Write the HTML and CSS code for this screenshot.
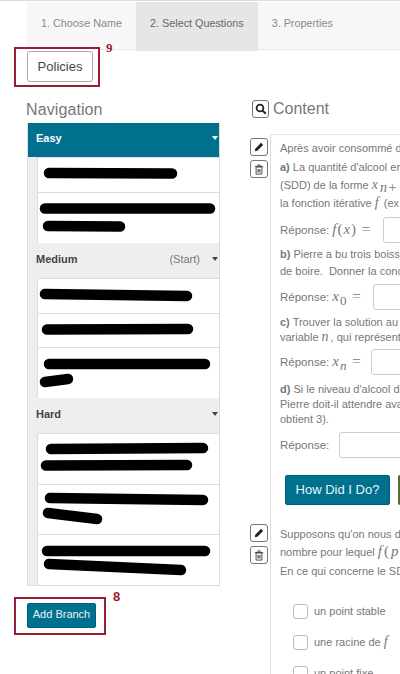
FILE: index.html
```html
<!DOCTYPE html>
<html lang="en">
<head>
  <meta charset="UTF-8" />
  <meta name="viewport" content="width=device-width, initial-scale=1.0"/>
  <title>Select Questions</title>
  <link rel="stylesheet" href="styles.css">
</head>
<body>
  <div class="page">
    <div class="tabs">
      <div class="tab">1. Choose Name</div>
      <div class="tab active">2. Select Questions</div>
      <div class="tab">3. Properties</div>
    </div>

    <div class="policies-row">
      <div class="callout policies-box"><button class="btn-plain" type="button">Policies</button></div>
      <div class="mark mark-nine">9</div>
    </div>

    <div class="columns">
      <div class="nav-col">
        <h2 class="heading nav-heading">Navigation</h2>
        <div class="nav-panel">
          <div class="branch current"><b>Easy</b><span class="caret"></span></div>
          <ul class="items">
            <li class="h35"><svg width="183" height="35"><path d="M11 15 L134 15.500"/></svg></li>
            <li class="h51"><svg width="183" height="51"><path d="M7 15.500 L172 15.500"/><path d="M10 33 L82 33.500"/></svg></li>
          </ul>
          <div class="branch"><b>Medium</b><span class="start">(Start)</span><span class="caret"></span></div>
          <ul class="items">
            <li class="h35"><svg width="183" height="35"><path d="M7 15 L149 17"/></svg></li>
            <li class="h34"><svg width="183" height="34"><path d="M9 15.500 L150 15"/></svg></li>
            <li class="h51"><svg width="183" height="51"><path d="M11 16 L167 16"/><path d="M7 34 L30 31"/></svg></li>
          </ul>
          <div class="branch"><b>Hard</b><span class="caret"></span></div>
          <ul class="items">
            <li class="h51"><svg width="183" height="51"><path d="M13 15 L165 14"/><path d="M8 31.500 L149 31"/></svg></li>
            <li class="h50"><svg width="183" height="50"><path d="M12 13 L165 15"/><path d="M10 28 L59 34"/></svg></li>
            <li class="h51"><svg width="183" height="51"><path d="M9 16 L167 16"/><path d="M11 29 L143 35"/></svg></li>
          </ul>
        </div>
        <div class="branch-row">
          <div class="callout branch-box"><button class="btn-blue btn-small" type="button">Add Branch</button></div>
          <div class="mark mark-eight">8</div>
        </div>
      </div>

      <div class="content-col">
        <h2 class="heading content-heading">
          <span class="icon-btn search-btn">
            <svg width="12" height="12" viewBox="0 0 12 12"><circle cx="5" cy="5" r="3.400" fill="none" stroke="#222" stroke-width="1.800"/><path d="M7.600 7.600 L10.800 10.800" stroke="#222" stroke-width="2"/></svg>
          </span>Content
        </h2>

        <div class="question first">
          <div class="tools">
            <span class="icon-btn tool">
              <svg width="10" height="10" viewBox="0 0 12 12"><path d="M8.500 1 L11 3.500 L4 10.500 L1 11 L1.500 8 Z" fill="#222"/></svg>
            </span>
            <span class="icon-btn tool">
              <svg width="10" height="11" viewBox="0 0 12 13"><path d="M2.500 3.500 H9.500 V12 H2.500 Z M1 3 H11 M4.500 2.500 V1 H7.500 V2.500 M4.700 6 V10 M6 6 V10 M7.300 6 V10" fill="none" stroke="#333" stroke-width="1"/></svg>
            </span>
          </div>
          <div class="body">
            <p class="line g5">Après avoir consommé d</p>
            <p class="line g3"><b>a)</b> La quantité d'alcool en</p>
            <p class="line g2">(SDD) de la forme <i class="m">x</i><sub class="m"><i>n</i>+</sub></p>
            <p class="line g2">la fonction itérative <i class="m">f</i> (ex</p>
            <div class="answer a-fx">Réponse: <span class="m"><i>f</i>(<i>x</i>) =</span><span class="field"></span></div>
            <p class="line g3"><b>b)</b> Pierre a bu trois boiss</p>
            <p class="line g1">de boire.&nbsp; Donner la conc</p>
            <div class="answer a-x0">Réponse: <span class="m"><i>x</i><sub>0</sub> =</span><span class="field"></span></div>
            <p class="line g4"><b>c)</b> Trouver la solution au</p>
            <p class="line tight">variable <i class="m">n</i>, qui représent</p>
            <div class="answer a-xn">Réponse: <span class="m"><i>x</i><sub><i>n</i></sub> =</span><span class="field"></span></div>
            <p class="line g6"><b>d)</b> Si le niveau d'alcool d</p>
            <p class="line tight">Pierre doit-il attendre ava</p>
            <p class="line tight">obtient 3).</p>
            <div class="answer a-d">Réponse:<span class="field"></span></div>
            <div class="actions">
              <button class="btn-blue btn-big" type="button">How Did I Do?</button>
              <button class="btn-next" type="button"></button>
            </div>
          </div>
        </div>

        <div class="question second">
          <div class="tools">
            <span class="icon-btn tool">
              <svg width="10" height="10" viewBox="0 0 12 12"><path d="M8.500 1 L11 3.500 L4 10.500 L1 11 L1.500 8 Z" fill="#222"/></svg>
            </span>
            <span class="icon-btn tool">
              <svg width="10" height="11" viewBox="0 0 12 13"><path d="M2.500 3.500 H9.500 V12 H2.500 Z M1 3 H11 M4.500 2.500 V1 H7.500 V2.500 M4.700 6 V10 M6 6 V10 M7.300 6 V10" fill="none" stroke="#333" stroke-width="1"/></svg>
            </span>
          </div>
          <div class="body">
            <p class="line g2">Supposons qu'on nous d</p>
            <p class="line g2">nombre pour lequel <span class="m wide"><i>f</i>(<i>p</i></span></p>
            <p class="line g3">En ce qui concerne le SD</p>
            <div class="option o-first"><span class="check"></span>un point stable</div>
            <div class="option"><span class="check"></span>une racine de&nbsp;<i class="m">f</i></div>
            <div class="option"><span class="check"></span>un point fixe</div>
          </div>
        </div>
      </div>
    </div>
  </div>
</body>
</html>
```

FILE: styles.css
```css
* {
  box-sizing: border-box;
}
html, body {
  margin: 0;
  padding: 0;
  background: #fff;
}
body {
  font-family: "Liberation Sans", Arial, sans-serif;
  color: #777;
  font-size: 11px;
}
.page {
  width: 400px;
  height: 674px;
  overflow: hidden;
  border-top: 1px solid #ddd;
  padding-top: 1px;
}

/* wizard tabs */
.tabs {
  display: flex;
  height: 48px;
  margin-left: 27px;
  background: #f7f7f7;
  border-bottom: 1px solid #e8e8e8;
}
.tab {
  padding: 0 14px;
  line-height: 42px;
  font-size: 10.800px;
  color: #8a8a8a;
}
.tab.active {
  height: 49px;
  background: #e6e6e6;
  color: #666;
}

/* red annotation boxes */
.callout {
  border: 2px solid #9a1c32;
  background: #fff;
}
.mark {
  color: #9a1c32;
  font-weight: bold;
  font-size: 13px;
}
.policies-row {
  display: flex;
  height: 40px;
  margin: -3px 0 0 14px;
  position: relative;
}
.policies-box {
  width: 86px;
  height: 40px;
  padding: 2px 0 0 11px;
}
.mark-nine {
  margin: -7px 0 0 6px;
  font-family: "Liberation Serif", serif;
}
.btn-plain {
  width: 66px;
  height: 31px;
  background: #fff;
  border: 1px solid #aaa;
  border-radius: 3px;
  color: #444;
  font: 13px "Liberation Sans", Arial, sans-serif;
  padding: 0;
}

.columns {
  display: flex;
  padding-top: 11px;
}
.heading {
  margin: 0;
  font-size: 16px;
  font-weight: normal;
  line-height: 20px;
  color: #777;
}
.nav-heading {
  margin: 2px 0 0 -1px;
  letter-spacing: 0.100px;
}

/* navigation column */
.nav-col {
  width: 193px;
  margin-left: 27px;
  margin-right: 30px;
  flex: none;
}
.nav-panel {
  margin-top: 3px;
  background: #eee;
  border: 1px solid #ddd;
  border-top: 0;
}
.branch {
  display: flex;
  align-items: center;
  height: 35px;
  padding: 0 1px 4px 8px;
  color: #444;
}
.branch b {
  flex: 1;
}
.branch.current {
  height: 34px;
  background: #00708f;
  color: #fff;
}
.start {
  margin-right: 12px;
  color: #777;
}
.caret {
  width: 0;
  height: 0;
  border-left: 3.500px solid transparent;
  border-right: 3.500px solid transparent;
  border-top: 4px solid #444;
}
.current .caret {
  border-top-color: #fff;
}
.items {
  list-style: none;
  margin: 0 0 0 9px;
  padding: 0;
  background: #fff;
  border-left: 1px solid #ddd;
}
.items li {
  border-top: 1px solid #ddd;
  overflow: hidden;
}
.items svg {
  display: block;
}
.items path {
  stroke: #000;
  stroke-width: 10.500;
  stroke-linecap: round;
  fill: none;
}
.h34 { height: 34px; }
.h35 { height: 35px; }
.h50 { height: 50px; }
.h51 { height: 51px; }

.branch-row {
  display: flex;
  margin: 11px 0 0 -13px;
}
.branch-box {
  width: 92px;
  height: 38px;
  padding: 4px 0 0 11px;
}
.mark-eight {
  margin: -8px 0 0 7px;
}
.btn-blue {
  background: #00708f;
  border: 1px solid #00617c;
  border-radius: 2px;
  color: #e8f4f8;
  font-family: "Liberation Sans", Arial, sans-serif;
  padding: 0;
}
.btn-small {
  width: 69px;
  height: 25px;
  padding-bottom: 4px;
  font-size: 11px;
}

/* content column */
.content-col {
  flex: none;
  width: 180px;
}
.content-heading {
  display: flex;
  align-items: center;
  margin-left: 2px;
  margin-top: 1px;
  height: 20px;
}
.icon-btn {
  display: flex;
  align-items: center;
  justify-content: center;
  background: #fff;
  border: 1px solid #777;
  border-radius: 3px;
}
.search-btn {
  width: 17px;
  height: 18px;
  margin-right: 4px;
}
.question {
  display: flex;
}
.first {
  margin-top: 15px;
}
.second {
  padding-top: 15px;
}
.tools {
  width: 20px;
  flex: none;
  display: flex;
  flex-direction: column;
  gap: 4px;
  padding-top: 4px;
}
.tool {
  width: 18px;
  height: 18px;
}
.body {
  flex: 1;
  min-width: 0;
  padding-left: 9px;
  border-left: 1px solid #ddd;
  white-space: nowrap;
}
.first .body {
  border-top: 1px solid #e6e6e6;
}
.second .body {
  margin-top: -15px;
  padding-top: 19px;
}
.line {
  margin: 0;
  height: 16px;
  line-height: 16px;
}
.g1 { margin-top: 1px; }
.g2 { margin-top: 2px; }
.g3 { margin-top: 3px; }
.g4 { margin-top: 4px; }
.g5 { margin-top: 5px; }
.g6 { margin-top: 6px; }
.tight {
  margin-top: -1px;
}
.m {
  font-family: "Liberation Serif", serif;
  font-size: 14px;
  line-height: 1;
  margin-right: 2px;
}
.wide {
  font-size: 15px;
  letter-spacing: 2px;
}
sub {
  font-size: 13px;
  line-height: 0;
}
.line sub {
  letter-spacing: 1.500px;
}
.answer {
  display: flex;
  align-items: center;
  gap: 3px;
  font-size: 11.500px;
  height: 27px;
  margin-top: 5px;
}
.answer .m {
  font-size: 15px;
  margin: 0;
  letter-spacing: 1px;
}
.field {
  flex: none;
  width: 120px;
  height: 26px;
  border: 1px solid #ccc;
  border-radius: 3px;
  background: #fff;
}
.a-fx .field { margin-left: 9px; }
.a-x0 { margin-top: 4px; }
.a-x0 .field { margin-left: 8px; }
.a-xn { margin-top: 3px; }
.a-xn .field { margin-left: 6px; }
.a-d { margin-top: 4px; }
.a-d .field { margin-left: 7px; }
.actions {
  display: flex;
  gap: 8px;
  margin: 17px 0 0 5px;
}
.btn-big {
  flex: none;
  width: 105px;
  height: 30px;
  padding-bottom: 2px;
  font-size: 13px;
}
.btn-next {
  flex: none;
  width: 40px;
  height: 30px;
  background: #5a6b2f;
  border: 0;
  border-radius: 2px;
}
.option {
  display: flex;
  align-items: center;
  height: 16px;
  margin: 15px 0 0 13px;
}
.option.o-first {
  margin-top: 24px;
}
.check {
  flex: none;
  width: 15px;
  height: 15px;
  margin-right: 6px;
  border: 1px solid #bbb;
  border-radius: 3px;
  background: #fff;
}
```
